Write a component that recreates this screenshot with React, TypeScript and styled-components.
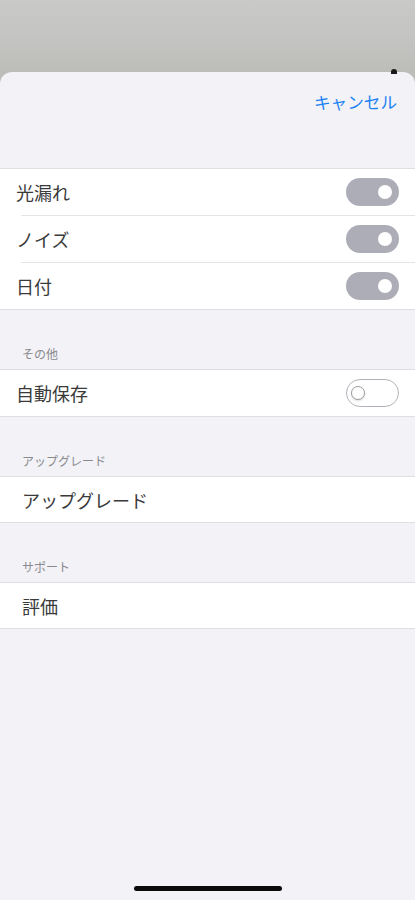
import React, { useState } from "react";
import styled, { createGlobalStyle } from "styled-components";

const Global = createGlobalStyle`
  html, body { margin: 0; padding: 0; }
  body {
    font-family: "Noto Sans CJK JP", "Noto Sans", sans-serif;
    background: #bdbeba;
    -webkit-font-smoothing: antialiased;
  }
`;

const Screen = styled.div`
  width: 415px;
  height: 900px;
  display: flex;
  flex-direction: column;
  background: #bdbeba;
  overflow: hidden;
`;

const Backdrop = styled.div`
  position: relative;
  height: 72px;
  flex: none;
  background: linear-gradient(180deg, #c9c9c7 0%, #c4c5c2 50%, #bcbdb9 100%);
`;

const StatusDot = styled.span`
  position: absolute;
  left: 391px;
  top: 69px;
  width: 6px;
  height: 5px;
  border-radius: 3px 3px 0 0;
  background: #1a1a1a;
`;

const Sheet = styled.div`
  flex: 1;
  display: flex;
  flex-direction: column;
  background: #f2f2f7;
  border-radius: 12px 12px 0 0;
`;

const NavBar = styled.div`
  height: 60px;
  display: flex;
  align-items: center;
  justify-content: flex-end;
  padding-right: 18px;
`;

const CancelButton = styled.button`
  border: none;
  background: none;
  padding: 0;
  font-family: inherit;
  font-size: 16.6px;
  line-height: 22px;
  color: #1a82f5;
  cursor: pointer;
`;

const Group = styled.div<{ $first?: boolean }>`
  margin-top: ${(p) => (p.$first ? "36px" : "0")};
`;

const GroupHeader = styled.div`
  height: 59px;
  display: flex;
  align-items: flex-end;
  padding: 0 22px 7px;
  box-sizing: border-box;
  font-size: 12px;
  line-height: 16px;
  color: #8a8a8e;
`;

const List = styled.div`
  background: #ffffff;
  border-top: 1px solid #dedee3;
  border-bottom: 1px solid #dedee3;
`;

const Row = styled.div<{ $pad: number; $divider?: boolean; $h?: number }>`
  height: ${(p) => p.$h ?? 46}px;
  display: flex;
  align-items: center;
  justify-content: space-between;
  padding: 0 16px 0 ${(p) => p.$pad}px;
  position: relative;
  ${(p) =>
    p.$divider
      ? `border-bottom: 1px solid transparent;
  &::after {
    content: "";
    position: absolute;
    left: 21px;
    right: 0;
    bottom: -1px;
    height: 1px;
    background: #e3e3e8;
  }`
      : ""}
`;

const Label = styled.span`
  font-size: 18px;
  line-height: 24px;
  color: #3a3a3a;
`;

const Track = styled.button<{ $on: boolean }>`
  width: 53px;
  height: 28px;
  border-radius: 14px;
  box-sizing: border-box;
  cursor: pointer;
  display: flex;
  align-items: center;
  justify-content: ${(p) => (p.$on ? "flex-end" : "flex-start")};
  background: ${(p) => (p.$on ? "#adadb7" : "#ffffff")};
  border: ${(p) => (p.$on ? "none" : "1.5px solid #b2b2ba")};
  padding: ${(p) => (p.$on ? "0 7px 0 0" : "0 0 0 4px")};
`;

const Knob = styled.span<{ $on: boolean }>`
  width: 14px;
  height: 14px;
  border-radius: 50%;
  background: #ffffff;
  box-sizing: border-box;
  border: ${(p) => (p.$on ? "none" : "1px solid #9c9ca2")};
  box-shadow: ${(p) => (p.$on ? "none" : "0 1px 2px rgba(0,0,0,0.15)")};
`;

const HomeBar = styled.div`
  margin-top: auto;
  margin-bottom: 9px;
  align-self: center;
  width: 148px;
  height: 5px;
  border-radius: 3px;
  background: #0a0a0a;
`;

function Toggle({ on, onClick }: { on: boolean; onClick: () => void }) {
  return (
    <Track $on={on} onClick={onClick} aria-pressed={on}>
      <Knob $on={on} />
    </Track>
  );
}

export default function App() {
  const [state, setState] = useState({
    light: true,
    noise: true,
    date: true,
    autosave: false,
  });
  const flip = (k: keyof typeof state) => () =>
    setState((s) => ({ ...s, [k]: !s[k] }));

  return (
    <>
      <Global />
      <Screen>
        <Backdrop>
          <StatusDot />
        </Backdrop>
        <Sheet>
          <NavBar>
            <CancelButton>キャンセル</CancelButton>
          </NavBar>

          <Group $first>
            <List>
              <Row $pad={16} $divider>
                <Label>光漏れ</Label>
                <Toggle on={state.light} onClick={flip("light")} />
              </Row>
              <Row $pad={16} $divider>
                <Label>ノイズ</Label>
                <Toggle on={state.noise} onClick={flip("noise")} />
              </Row>
              <Row $pad={16}>
                <Label>日付</Label>
                <Toggle on={state.date} onClick={flip("date")} />
              </Row>
            </List>
          </Group>

          <Group>
            <GroupHeader>その他</GroupHeader>
            <List>
              <Row $pad={16} $h={46}>
                <Label>自動保存</Label>
                <Toggle on={state.autosave} onClick={flip("autosave")} />
              </Row>
            </List>
          </Group>

          <Group>
            <GroupHeader>アップグレード</GroupHeader>
            <List>
              <Row $pad={22} $h={45}>
                <Label>アップグレード</Label>
              </Row>
            </List>
          </Group>

          <Group>
            <GroupHeader>サポート</GroupHeader>
            <List>
              <Row $pad={22} $h={45}>
                <Label>評価</Label>
              </Row>
            </List>
          </Group>

          <HomeBar />
        </Sheet>
      </Screen>
    </>
  );
}
